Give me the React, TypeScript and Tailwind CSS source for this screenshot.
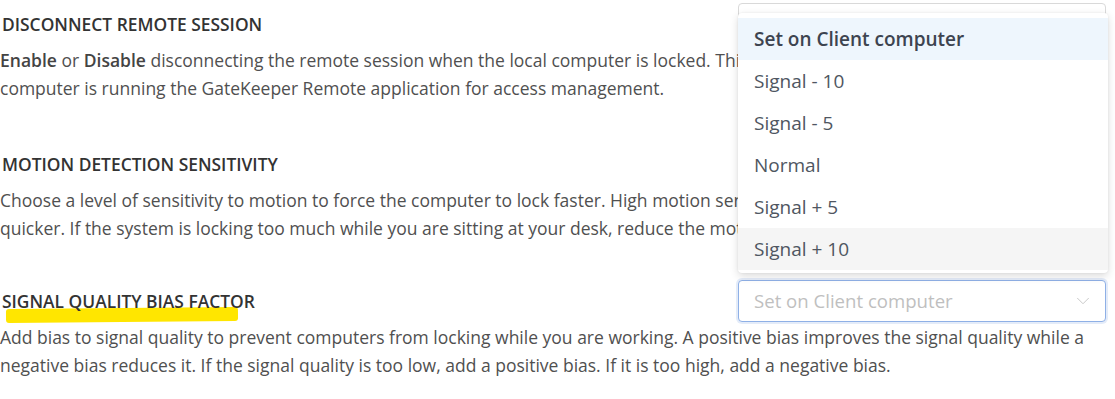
import { ChevronDown } from 'lucide-react'

const OPTIONS = ['Set on Client computer', 'Signal - 10', 'Signal - 5', 'Normal', 'Signal + 5', 'Signal + 10']

function Select({ focused }: { focused?: boolean }) {
  return (
    <div
      className={
        'w-[368px] h-[42px] shrink-0 rounded-[4px] border bg-white flex items-center justify-between pl-[15px] pr-[11px] ' +
        (focused ? 'border-[#8fb0e6] shadow-[0_0_0_2px_rgba(147,180,232,0.25)]' : 'border-[#d9d9d9]')
      }
    >
      <span className="text-[18.6px] text-[#bfbfbf]">Set on Client computer</span>
      <ChevronDown className="w-[22px] h-[22px] text-[#c4c4c4]" strokeWidth={1} />
    </div>
  )
}

function Section({
  title,
  children,
  highlight,
  focused,
  top,
}: {
  title: string
  children: React.ReactNode
  highlight?: boolean
  focused?: boolean
  top: string
}) {
  return (
    <div className={top}>
      <div className="relative flex items-center justify-between h-[42px]">
        {highlight && (
          <span className="absolute left-[6px] top-[28px] w-[232px] h-[14px] bg-[#ffe600] rounded-[3px] -rotate-[0.5deg]" />
        )}
        <h3 className="relative pl-[2px] text-[17.4px] font-[560] text-[#333333]">{title}</h3>
        <Select focused={focused} />
      </div>
      <p className="mt-[1px] pr-[8px] text-[17.5px] leading-[28px] text-[#505050]">{children}</p>
    </div>
  )
}

export default function App() {
  return (
    <div
      className="relative w-[1115px] h-[399px] overflow-hidden bg-white"
      style={{ fontFamily: '"Open Sans", "Noto Sans", sans-serif' }}
    >
      <div className="w-[1106px]">
        <Section title="DISCONNECT REMOTE SESSION" top="pt-[3px]">
          <b className="font-semibold text-[#444]">Enable</b> or <b className="font-semibold text-[#444]">Disable</b>{' '}
          disconnecting the remote session when the local computer is locked. This feature is only available if the local
          computer is running the GateKeeper Remote application for access management.
        </Section>
        <Section title="MOTION DETECTION SENSITIVITY" top="mt-[41px]">
          Choose a level of sensitivity to motion to force the computer to lock faster. High motion sensitivity locks the
          computer
          <br />
          quicker. If the system is locking too much while you are sitting at your desk, reduce the motion sensitivity.
        </Section>
        <Section title="SIGNAL QUALITY BIAS FACTOR" top="mt-[38px]" highlight focused>
          Add bias to signal quality to prevent computers from locking while you are working. A positive bias improves the
          signal quality while a negative bias reduces it. If the signal quality is too low, add a positive bias. If it is too
          high, add a negative bias.
        </Section>
      </div>

      {/* open dropdown menu */}
      <div className="absolute left-[738px] top-[13px] w-[370px] pt-[5px] pb-[3px] bg-white rounded-[4px] shadow-[0_3px_8px_rgba(0,0,0,0.14),0_0_2px_rgba(0,0,0,0.08)]">
        {OPTIONS.map((o, i) => (
          <div
            key={o}
            className={
              'h-[42px] flex items-center pl-[16px] text-[19px] ' +
              (i === 0
                ? 'bg-[#eef6fd] font-semibold text-[#3d4450]'
                : i === OPTIONS.length - 1
                  ? 'bg-[#f5f5f5] text-[#4f5661]'
                  : 'text-[#4f5661]')
            }
          >
            {o}
          </div>
        ))}
      </div>
    </div>
  )
}
